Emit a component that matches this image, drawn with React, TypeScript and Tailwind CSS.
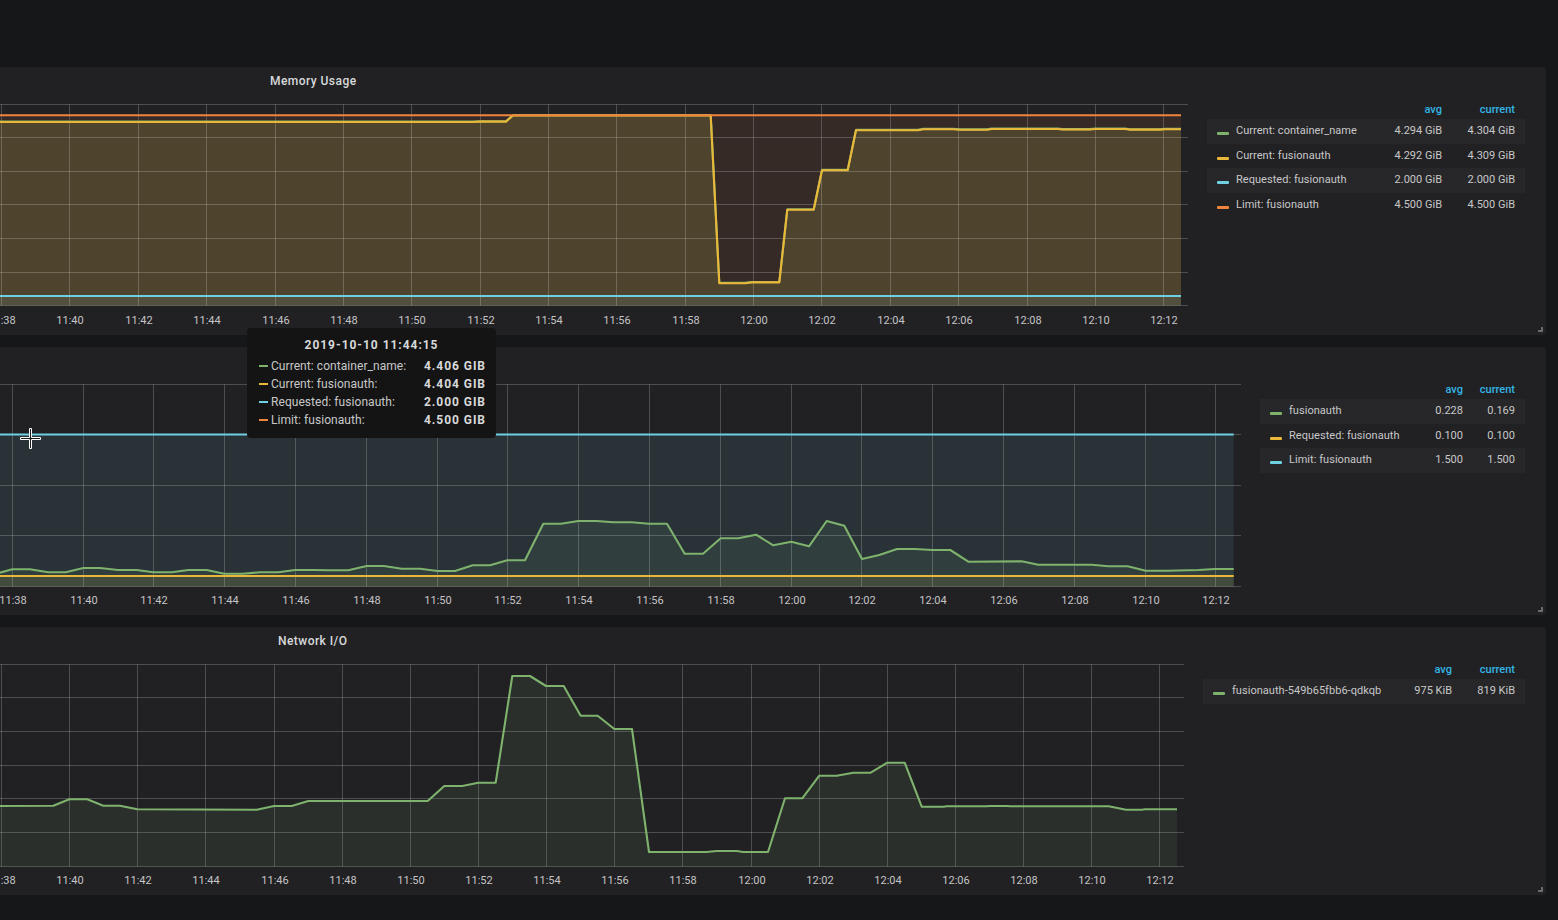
import type { ReactNode } from "react";

const GREEN = "#7eb26d";
const YELLOW = "#eab839";
const CYAN = "#6ed0e0";
const ORANGE = "#ef843c";

type Pt = [number, number];

type Series = {
  color: string;
  points: Pt[];
};

type ChartProps = {
  top: number;
  width: number;
  gridRight: number;
  labelY: number;
  hGrid: number[];
  vGrid: number[];
  series: Series[];
};

type LegendRow = {
  color: string;
  name: string;
  avg: string;
  current: string;
};

const TICKS = Array.from({ length: 18 }, (_, i) => {
  const total = 11 * 60 + 38 + i * 2;
  const m = total % 60;
  return `${Math.floor(total / 60)}:${m < 10 ? "0" : ""}${m}`;
});

const memoryCurrent: Pt[] = [
  [0, 122], [473, 122], [480, 121.6], [506, 121.6], [513, 115.5], [710.7, 115.5], [719.3, 283.3], [745, 283.3],
  [751.7, 282.4], [779.3, 282.4], [787.3, 209.7], [813.7, 209.7], [822, 170.3], [847.7, 170.3], [856, 130.3],
  [918, 130.3], [923.3, 129.2], [953, 129.2], [960, 129.8], [987, 129.8], [991.7, 129], [1058, 129], [1062, 129.5],
  [1090, 129.5], [1095, 129], [1125, 129], [1130, 129.6], [1160, 129.6], [1165, 129.2], [1181, 129.2],
];

const cpuCurrent: Pt[] = [
  [0, 572.7], [12.3, 569.3], [30, 569.3], [48.3, 572.3], [65.7, 572.3], [83.3, 568], [100, 568], [118, 570],
  [136.7, 570], [153.3, 572.3], [171.7, 572.3], [188.3, 570], [206.7, 570], [224.3, 573.7], [242.3, 573.7],
  [260, 572.3], [278.3, 572.3], [295, 570], [313, 570], [330, 570.3], [348.3, 570.3], [366.7, 566], [384, 566],
  [401.7, 568.7], [420, 568.7], [437.7, 571], [455, 571], [472.7, 565.3], [490, 565.3], [507.3, 560.3], [525, 560.3],
  [543.3, 523.7], [561, 523.7], [578.3, 521], [596.7, 521], [613.3, 522.3], [631.7, 522.3], [649, 523.7], [667, 523.7],
  [684.7, 553.7], [703, 553.7], [720.7, 538.3], [738.3, 538.3], [756, 534.7], [773.3, 545.3], [791.3, 541.7],
  [809, 546.3], [826.7, 521], [844.3, 525.7], [862, 559], [879.3, 555], [897, 549], [915, 549], [932.3, 550],
  [950.3, 550], [968.3, 561.7], [1021.7, 561.3], [1038.3, 564.7], [1091.7, 564.7], [1108.3, 566.3], [1127.7, 566.3],
  [1145.7, 570.7], [1166.7, 570.7], [1198.3, 570], [1215, 569], [1233.7, 569],
];

const networkCurrent: Pt[] = [
  [0, 806], [53.3, 805.7], [69.3, 799.3], [87.3, 799.3], [103.3, 805.7], [120, 805.7], [137.3, 809.3], [256.7, 809.7],
  [274, 806], [291.7, 806], [308.3, 801], [427.7, 801], [444.3, 786], [462.3, 786], [478.3, 782.7], [495.7, 782.7],
  [512.3, 676], [530, 676], [546, 686], [563.7, 686], [580.7, 715.7], [597.7, 715.7], [614.3, 729], [632, 729],
  [649, 852], [706.7, 852], [716.7, 851], [736.7, 851], [743, 852], [768, 852], [785, 798.3], [802.3, 798.3],
  [819.3, 775.7], [836.7, 775.7], [853.3, 772.7], [870.7, 772.7], [887.3, 762.7], [904.7, 762.7], [921.7, 806.7],
  [943.3, 806.7], [946.7, 806.3], [986.7, 806.3], [990, 806], [1006.7, 806], [1010, 806.3], [1108.7, 806.3],
  [1126, 809.7], [1141.7, 809.7], [1145, 809.3], [1177, 809.3],
];

function flat(y: number, right: number): Pt[] {
  return [
    [0, y],
    [right, y],
  ];
}

function toPath(points: Pt[]) {
  return points.map(([x, y], i) => `${i ? "L" : "M"}${x} ${y}`).join(" ");
}

function Chart({ top, width, gridRight, labelY, hGrid, vGrid, series }: ChartProps) {
  const bottom = hGrid[hGrid.length - 1];
  const height = 241;

  return (
    <svg width={width} height={height} viewBox={`0 ${top} ${width} ${height}`} className="shrink-0">
      {series.map((s) => (
        <path
          key={s.color}
          d={`${toPath(s.points)} L${s.points[s.points.length - 1][0]} ${bottom} L0 ${bottom} Z`}
          fill={s.color}
          fillOpacity={0.1}
        />
      ))}
      {hGrid.map((y) => (
        <line key={y} x1={0} x2={gridRight} y1={y} y2={y} stroke="#fff" strokeOpacity={0.2} />
      ))}
      {vGrid.map((x) => (
        <line key={x} x1={x + 0.5} x2={x + 0.5} y1={hGrid[0]} y2={bottom} stroke="#fff" strokeOpacity={0.2} />
      ))}
      {series.map((s) => (
        <path key={s.color} d={toPath(s.points)} fill="none" stroke={s.color} strokeWidth={2.1} strokeLinejoin="round" />
      ))}
      {vGrid.map((x, i) => (
        <text key={x} x={x + 1} y={labelY} textAnchor="middle" dominantBaseline="central" fontSize={11} fill="#c4c4c4">
          {TICKS[i]}
        </text>
      ))}
    </svg>
  );
}

function Legend({
  rows,
  width,
  avgWidth,
  currentWidth,
}: {
  rows: LegendRow[];
  width: number;
  avgWidth: number;
  currentWidth: number;
}) {
  const avgStyle = { width: avgWidth };
  const currentStyle = { width: currentWidth };

  return (
    <div className="ml-auto mr-[21px] shrink-0 pt-[6px] text-[11px] text-[#c8c8c8]" style={{ width }}>
      <div className="flex h-[19.2px] items-center justify-end pr-[10px] pt-[1px] font-medium text-[#33b5e5]">
        <span className="text-right" style={avgStyle}>
          avg
        </span>
        <span className="text-right" style={currentStyle}>
          current
        </span>
      </div>
      {rows.map((row) => (
        <div key={row.name} className="flex h-[24.6px] items-center px-[10px] even:bg-[#27272a]">
          <span className="mt-1 mr-[7px] h-[3px] w-3 shrink-0 rounded-[1px]" style={{ backgroundColor: row.color }} />
          <span className="min-w-0 flex-1 truncate tracking-[0.04px]">{row.name}</span>
          <span className="shrink-0 text-right" style={avgStyle}>
            {row.avg}
          </span>
          <span className="shrink-0 text-right" style={currentStyle}>
            {row.current}
          </span>
        </div>
      ))}
    </div>
  );
}

function Panel({
  title,
  titleClass,
  children,
}: {
  title?: string;
  titleClass?: string;
  children: ReactNode;
}) {
  return (
    <section className="relative h-[268px] w-[1546px] rounded-r-[3px] bg-[#212124]">
      <header className={`flex h-[27px] items-center text-xs font-medium tracking-[0.45px] text-[#d8d9da] ${titleClass ?? ""}`}>
        {title}
      </header>
      <div className="flex">{children}</div>
      <svg width="6" height="6" className="absolute bottom-[2px] right-[2px]">
        <path d="M5 0V5H0V3H3V0Z" fill="#6b6b6e" />
      </svg>
    </section>
  );
}

function Tooltip() {
  const rows = [
    { color: GREEN, name: "Current: container_name:", value: "4.406 GIB" },
    { color: YELLOW, name: "Current: fusionauth:", value: "4.404 GIB" },
    { color: CYAN, name: "Requested: fusionauth:", value: "2.000 GIB" },
    { color: ORANGE, name: "Limit: fusionauth:", value: "4.500 GIB" },
  ];

  return (
    <div className="absolute left-[247px] top-[328px] h-[110px] w-[249px] rounded bg-[#141414] pl-3 pr-[10px] pt-[8px] text-xs text-[#c8c8c8]">
      <div className="mb-[3px] h-[18px] pr-[2px] text-center font-bold leading-[18px] tracking-[0.96px] text-[#d8d9da]">
        2019-10-10 11:44:15
      </div>
      {rows.map((row) => (
        <div key={row.name} className="flex h-[18px] items-center">
          <span className="mr-[3px] h-[2px] w-[9px] shrink-0" style={{ backgroundColor: row.color }} />
          <span className="flex-1 tracking-[0.06px]">{row.name}</span>
          <span className="font-bold tracking-[0.96px] text-[#d8d9da]">{row.value}</span>
        </div>
      ))}
    </div>
  );
}

function Crosshair() {
  return (
    <svg width="23" height="23" viewBox="0 0 23 23" className="absolute left-[19px] top-[427px]">
      <path
        d="M10.5 1.5H12.5V10.5H21.5V12.5H12.5V21.5H10.5V12.5H1.5V10.5H10.5Z"
        fill="#1b1b1d"
        stroke="#fff"
        strokeWidth="1"
      />
    </svg>
  );
}

export default function App() {
  return (
    <div className="relative flex h-[920px] w-[1558px] flex-col gap-3 overflow-hidden bg-[#161719] pt-[67px] [font-family:Roboto,sans-serif]">
      <Panel title="Memory Usage" titleClass="pl-[270px]">
        <Chart
          top={94}
          width={1195}
          gridRight={1188}
          labelY={320.5}
          hGrid={[104.5, 137.5, 171.5, 204.5, 238.5, 272.5, 305.5]}
          vGrid={[1, 69, 138, 206, 275, 343, 411, 480, 548, 616, 685, 753, 821, 890, 958, 1027, 1095, 1163]}
          series={[
            { color: GREEN, points: memoryCurrent.map(([x, y]) => [x, y - 0.4] as Pt) },
            { color: YELLOW, points: memoryCurrent },
            { color: CYAN, points: flat(296, 1181) },
            { color: ORANGE, points: flat(115.3, 1181) },
          ]}
        />
        <Legend
          width={318}
          avgWidth={73}
          currentWidth={73}
          rows={[
            { color: GREEN, name: "Current: container_name", avg: "4.294 GiB", current: "4.304 GiB" },
            { color: YELLOW, name: "Current: fusionauth", avg: "4.292 GiB", current: "4.309 GiB" },
            { color: CYAN, name: "Requested: fusionauth", avg: "2.000 GiB", current: "2.000 GiB" },
            { color: ORANGE, name: "Limit: fusionauth", avg: "4.500 GiB", current: "4.500 GiB" },
          ]}
        />
      </Panel>

      <Panel>
        <Chart
          top={374}
          width={1245}
          gridRight={1241}
          labelY={600.5}
          hGrid={[384.5, 434.5, 485.5, 535.5, 586.5]}
          vGrid={[12, 83, 153, 224, 295, 366, 437, 507, 578, 649, 720, 791, 861, 932, 1003, 1074, 1145, 1215]}
          series={[
            { color: GREEN, points: cpuCurrent },
            { color: YELLOW, points: flat(576, 1233.7) },
            { color: CYAN, points: flat(434.5, 1233.7) },
          ]}
        />
        <Legend
          width={265}
          avgWidth={52}
          currentWidth={52}
          rows={[
            { color: GREEN, name: "fusionauth", avg: "0.228", current: "0.169" },
            { color: YELLOW, name: "Requested: fusionauth", avg: "0.100", current: "0.100" },
            { color: CYAN, name: "Limit: fusionauth", avg: "1.500", current: "1.500" },
          ]}
        />
      </Panel>

      <Panel title="Network I/O" titleClass="pl-[278px]">
        <Chart
          top={654}
          width={1190}
          gridRight={1184}
          labelY={880.5}
          hGrid={[664.5, 697.5, 731.5, 765.5, 798.5, 832.5, 866.5]}
          vGrid={[1, 69, 137, 205, 274, 342, 410, 478, 546, 614, 682, 751, 819, 887, 955, 1023, 1091, 1159]}
          series={[{ color: GREEN, points: networkCurrent }]}
        />
        <Legend
          width={322}
          avgWidth={63}
          currentWidth={63}
          rows={[{ color: GREEN, name: "fusionauth-549b65fbb6-qdkqb", avg: "975 KiB", current: "819 KiB" }]}
        />
      </Panel>

      <Tooltip />
      <Crosshair />
    </div>
  );
}
